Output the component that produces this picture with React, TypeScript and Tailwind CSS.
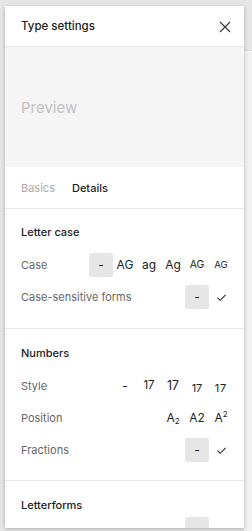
import React from 'react';

const font = { fontFamily: 'Inter, "Noto Sans", sans-serif' };

function Check() {
  return (
    <svg className="w-[13px] h-[13px] text-gray-800" viewBox="0 0 12 12" fill="none" stroke="currentColor" strokeWidth={1}>
      <path d="M2.2 6.2l2.6 2.4 5-5" />
    </svg>
  );
}

function Opt({ children, active }: { children: React.ReactNode; active?: boolean }) {
  return (
    <div
      className={`w-6 h-6 flex items-center justify-center text-[12px] text-[#222] ${active ? 'bg-[#e6e6e6] rounded-[2px]' : ''}`}
    >
      {children}
    </div>
  );
}

function Row({ label, children }: { label: string; children: React.ReactNode }) {
  return (
    <div className="h-8 flex items-center justify-between">
      <span className="text-[11px] text-[#666]">{label}</span>
      <div className="flex items-center">{children}</div>
    </div>
  );
}

export default function App() {
  return (
    <div className="w-[252px] h-[531px] overflow-hidden bg-[#e6e6e6] relative" style={font}>
      {/* panel behind on the right */}
      <div className="absolute right-0 top-[50px] w-[8px] h-[481px] bg-[#f1f1f1] border-t border-[#ddd]" />
      <div className="relative ml-[5px] mt-[6px] w-[239px] h-[522px] bg-white shadow-[0_1px_4px_rgba(0,0,0,0.25)] overflow-hidden">
        {/* header */}
        <div className="h-[41px] flex items-center justify-between pl-4 pr-[13px] pt-[2px] border-b border-[#e8e8e8]">
          <span className="text-[11.5px] font-medium text-[#222]">Type settings</span>
          <svg className="w-3 h-3 text-[#333]" viewBox="0 0 12 12" stroke="currentColor" strokeWidth={1.1}>
            <path d="M1 1l10 10M11 1L1 11" />
          </svg>
        </div>

        {/* preview */}
        <div className="h-[120px] bg-[#f5f5f5] flex items-center pl-4 pt-[2px]">
          <span className="text-[15px] text-[#c2c2c2]">Preview</span>
        </div>

        {/* tabs */}
        <div className="h-[42px] flex items-center gap-[17px] pl-4 pt-[2px] border-b border-[#e8e8e8]">
          <span className="text-[11px] text-[#aaa]">Basics</span>
          <span className="text-[11px] font-medium text-[#222]">Details</span>
        </div>

        {/* letter case */}
        <div className="pl-4 pr-[11px] pt-[15px] pb-[15px] border-b border-[#e8e8e8]">
          <div className="h-4 flex items-center text-[11px] font-medium text-[#222] mb-[9px]">Letter case</div>
          <Row label="Case">
            <Opt active>-</Opt>
            <Opt>AG</Opt>
            <Opt>ag</Opt>
            <Opt>Ag</Opt>
            <Opt><span className="text-[10.5px]">AG</span></Opt>
            <Opt><span className="text-[9.5px]">AG</span></Opt>
          </Row>
          <Row label="Case-sensitive forms">
            <Opt active>-</Opt>
            <Opt><Check /></Opt>
          </Row>
        </div>

        {/* numbers */}
        <div className="pl-4 pr-[11px] pt-[16px] pb-[14px] border-b border-[#e8e8e8]">
          <div className="h-4 flex items-center text-[11px] font-medium text-[#222] mb-[9px]">Numbers</div>
          <Row label="Style">
            <Opt>-</Opt>
            <Opt><span className="text-[11.5px]">17</span></Opt>
            <Opt><span className="text-[12.5px]">17</span></Opt>
            <Opt><span className="text-[11px] translate-y-[2px]">17</span></Opt>
            <Opt><span className="text-[11px] translate-y-[2px] tracking-[1px]">17</span></Opt>
          </Row>
          <Row label="Position">
            <Opt>A<span className="text-[8px] translate-y-[3px]">2</span></Opt>
            <Opt>A2</Opt>
            <Opt>A<span className="text-[8px] -translate-y-[4px]">2</span></Opt>
          </Row>
          <Row label="Fractions">
            <Opt active>-</Opt>
            <Opt><Check /></Opt>
          </Row>
        </div>

        {/* letterforms */}
        <div className="pl-4 pr-[11px] pt-[16px]">
          <div className="h-4 flex items-center text-[11px] font-medium text-[#222] mb-[4px]">Letterforms</div>
          <div className="flex justify-end">
            <div className="w-6 h-6 bg-[#e6e6e6] rounded-[2px] mr-6" />
          </div>
        </div>
      </div>
    </div>
  );
}
